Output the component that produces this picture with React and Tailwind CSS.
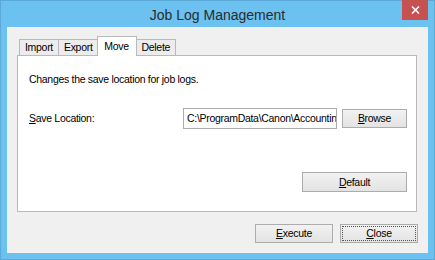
import React from "react";

const font = { fontFamily: '"Liberation Sans", Arial, sans-serif' };

const Btn = ({ children, className = "", focus = false }) => (
  <button
    className={`h-[19px] border border-[#acacac] bg-gradient-to-b from-[#f2f2f2] to-[#e3e3e3] text-[10.5px] tracking-[-0.3px] text-black flex items-center justify-center p-[2px] ${className}`}
  >
    <span
      className={`w-full h-full flex items-center justify-center leading-none ${
        focus ? "outline outline-1 outline-dotted outline-[#555]" : ""
      }`}
    >
      {children}
    </span>
  </button>
);

const tabs = ["Import", "Export", "Move", "Delete"];

export default function App() {
  return (
    <div
      className="w-[435px] h-[260px] bg-[#6bc1f0] border border-[#5aa9d6] flex flex-col"
      style={font}
    >
      {/* title bar */}
      <div className="relative h-[26px] flex items-center justify-center">
        <span className="text-[14px] text-[#2b2b2b] pt-[2px]">Job Log Management</span>
        <div className="absolute right-[6px] top-[-1px] w-[26px] h-[20px] bg-[#c75050] flex items-center justify-center">
          <svg width="9" height="8" viewBox="0 0 9 8">
            <path d="M1 0.5 L8 7.5 M8 0.5 L1 7.5" stroke="#fff" strokeWidth="1.6" />
          </svg>
        </div>
      </div>

      {/* client */}
      <div className="mx-[6px] h-[226px] bg-[#f0f0f0] flex flex-col pt-[10px] text-[10.5px] tracking-[-0.3px] text-black">
        <div className="flex items-end h-[18px] pl-[12px]">
          {tabs.map((t) =>
            t === "Move" ? (
              <div
                key={t}
                className="relative z-10 -mb-px h-[20px] w-[40px] bg-white border border-b-0 border-[#b9b9b9] flex items-start justify-center pt-[2px] -mx-px"
              >
                {t}
              </div>
            ) : (
              <div
                key={t}
                className="h-[16px] px-[5px] bg-[#ececec] border border-b-0 border-[#b9b9b9] flex items-center justify-center -mr-px"
              >
                {t}
              </div>
            )
          )}
        </div>

        <div className="ml-[10px] w-[400px] h-[157px] bg-white border border-[#b9b9b9] flex flex-col">
          <div className="mt-[16px] pl-[11px] leading-[14px]">
            Changes the save location for job logs.
          </div>
          <div className="mt-[22px] flex items-center pl-[11px] pr-[9px]">
            <span>
              <u>S</u>ave Location:
            </span>
            <div className="ml-auto w-[154px] h-[21px] border border-[#acacac] bg-white flex items-center pl-[3px] overflow-hidden whitespace-nowrap">
              C:\ProgramData\Canon\Accountin
            </div>
            <Btn className="ml-[5px] w-[65px]">
              <span>
                <u>B</u>rowse
              </span>
            </Btn>
          </div>
          <div className="mt-[43px] flex justify-end pr-[9px]">
            <Btn className="w-[105px] h-[20px]">
              <span>
                <u>D</u>efault
              </span>
            </Btn>
          </div>
        </div>

        <div className="mt-[12px] flex justify-end gap-[7px] pr-[10px]">
          <Btn className="w-[78px]">
            <span>
              <u>E</u>xecute
            </span>
          </Btn>
          <Btn className="w-[78px]" focus>
            <span>
              <u>C</u>lose
            </span>
          </Btn>
        </div>
      </div>
    </div>
  );
}
